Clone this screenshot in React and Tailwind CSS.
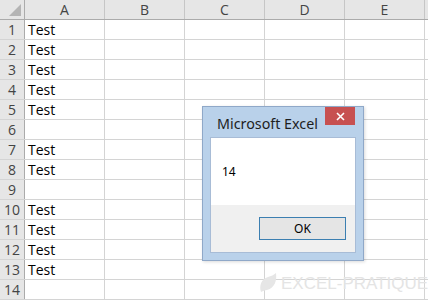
const rows = [
  "Test", "Test", "Test", "Test", "Test", "", "Test", "Test", "", "Test", "Test", "Test", "Test", "",
];
const cols = ["A", "B", "C", "D", "E"];

function Header() {
  return (
    <div className="flex h-[20px] bg-[#e6e6e6] border-b border-[#ababab] text-[#444] text-[14px]">
      <div className="relative w-[25px] shrink-0 border-r border-[#ababab]">
        <div className="absolute right-[3px] bottom-[3px] w-0 h-0 border-l-[12px] border-l-transparent border-b-[12px] border-b-[#b4b4b4]" />
      </div>
      {cols.map((c) => (
        <div key={c} className="w-[80px] shrink-0 border-r border-[#c6c6c6] flex items-center justify-center leading-none">
          {c}
        </div>
      ))}
    </div>
  );
}

function Row({ n, text }) {
  return (
    <div className="flex h-[20px] border-b border-[#d4d4d4] text-[14px]">
      <div className="w-[25px] shrink-0 bg-[#e6e6e6] border-r border-[#ababab] flex items-center justify-center text-[#444] leading-none">
        {n}
      </div>
      {cols.map((c, i) => (
        <div key={c} className="w-[80px] shrink-0 border-r border-[#d4d4d4] flex items-center pl-[3px] text-black leading-none">
          {i === 0 ? text : ""}
        </div>
      ))}
    </div>
  );
}

function MsgBox() {
  return (
    <div className="absolute left-[202px] top-[106px] w-[162px] h-[155px] bg-[#b9d1ea] border border-[#8fa8c8] flex flex-col shadow-[1px_1px_3px_rgba(0,0,0,0.15)]">
      <div className="h-[30px] flex items-start justify-between pl-[14px] pr-[8px]">
        <span className="whitespace-nowrap text-[14.3px] text-[#1e1e1e] mt-[6px] font-['Noto_Sans',sans-serif]">Microsoft Excel</span>
        <div className="w-[30px] h-[18px] shrink-0 bg-[#c75050] flex items-center justify-center text-white">
          <svg width="9" height="9" viewBox="0 0 9 9">
            <path d="M1 1 L8 8 M8 1 L1 8" stroke="white" strokeWidth="1.6" />
          </svg>
        </div>
      </div>
      <div className="mx-[7px] flex-1 mb-[7px] flex flex-col border border-[#a8bcd6]">
        <div className="h-[67px] bg-white pl-[11px] pt-[25px] text-[12px] text-black font-['Noto_Sans',sans-serif]">14</div>
        <div className="flex-1 bg-[#f0f0f0] flex justify-end pr-[9px] pt-[12px]">
          <div className="w-[87px] h-[23px] border border-[#3c7fb1] bg-[#e5e5e5] flex items-center justify-center text-[12px] text-black font-['Noto_Sans',sans-serif]">
            OK
          </div>
        </div>
      </div>
    </div>
  );
}

export default function App() {
  return (
    <div className="relative w-[428px] h-[302px] overflow-hidden bg-white font-['Open_Sans',sans-serif]">
      <Header />
      {rows.map((t, i) => (
        <Row key={i} n={i + 1} text={t} />
      ))}
      <MsgBox />
      <div className="absolute left-[258px] top-[272px] flex items-center gap-[3px] whitespace-nowrap">
        <svg width="20" height="22" viewBox="0 0 20 22">
          <path d="M3 20 C1 14 3 7 10 5 C13 4 16 3 18 1 C19 8 17 16 9 18 C7 18 5 19 3 20 Z" fill="#e6e6e6" />
        </svg>
        <span className="text-[17px] text-[#e4e4e4] font-['Liberation_Sans',sans-serif] leading-none">
          EXCEL-PRATIQUE
        </span>
      </div>
    </div>
  );
}
